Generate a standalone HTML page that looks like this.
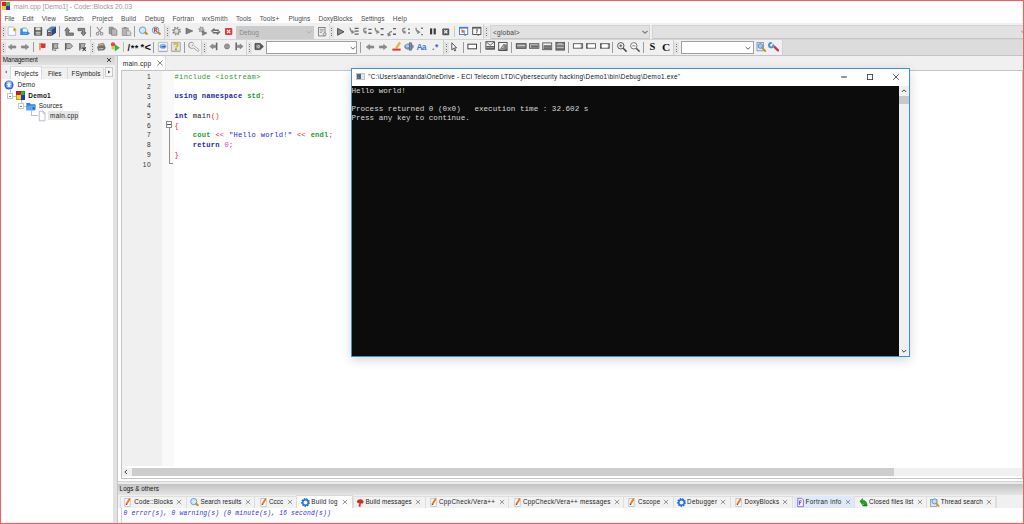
<!DOCTYPE html>
<html lang="en"><head><meta charset="utf-8"><title>main.cpp [Demo1] - Code::Blocks 20.03</title>
<style>
html,body{margin:0;padding:0;background:#fff;overflow:hidden;}
body{width:1024px;height:524px;position:relative;overflow:hidden;font-family:"Liberation Sans",sans-serif;}
div,span.t,svg.i{position:absolute;box-sizing:border-box;}
span.t{white-space:pre;display:block;}
svg.i{overflow:visible;}
</style></head>
<body>
<div style="left:0px;top:0px;width:1024px;height:24px;background:#fff;"></div>
<div style="left:0px;top:23.2px;width:1024px;height:32.8px;background:#f0f0f0;"></div>
<div style="left:0px;top:39px;width:1024px;height:1px;background:#d4d4d4;"></div>
<div style="left:0px;top:55px;width:1024px;height:1px;background:#c4c4c4;"></div>
<div style="left:0px;top:56px;width:1024px;height:468px;background:#f0f0f0;"></div>
<span id="t0" class="t" style="left:13.5px;top:1.40px;font-size:6.8px;line-height:12px;color:#9a9a9a;font-family:'Liberation Sans', sans-serif;letter-spacing:-0.047px;">main.cpp [Demo1] - Code::Blocks 20.03</span>
<div style="left:1.9px;top:2.2px;width:4.3px;height:4px;background:#d62222;"></div>
<div style="left:6.4px;top:2.4px;width:3.4px;height:3.8px;background:#4cb848;"></div>
<div style="left:1.9px;top:6.2px;width:4.3px;height:4.2px;background:#dcd838;"></div>
<div style="left:6.2px;top:6.2px;width:3.6px;height:4.2px;background:#4030c0;"></div>
<span id="t1" class="t" style="left:4.5px;top:13.00px;font-size:6.5px;line-height:12px;color:#4a4a4a;font-family:'Liberation Sans', sans-serif;letter-spacing:-0.146px;">File</span>
<span id="t2" class="t" style="left:22.5px;top:13.00px;font-size:6.5px;line-height:12px;color:#4a4a4a;font-family:'Liberation Sans', sans-serif;letter-spacing:-0.076px;">Edit</span>
<span id="t3" class="t" style="left:41.7px;top:13.00px;font-size:6.5px;line-height:12px;color:#4a4a4a;font-family:'Liberation Sans', sans-serif;letter-spacing:0.054px;">View</span>
<span id="t4" class="t" style="left:64px;top:13.00px;font-size:6.5px;line-height:12px;color:#4a4a4a;font-family:'Liberation Sans', sans-serif;letter-spacing:-0.202px;">Search</span>
<span id="t5" class="t" style="left:92px;top:13.00px;font-size:6.5px;line-height:12px;color:#4a4a4a;font-family:'Liberation Sans', sans-serif;letter-spacing:0.095px;">Project</span>
<span id="t6" class="t" style="left:121px;top:13.00px;font-size:6.5px;line-height:12px;color:#4a4a4a;font-family:'Liberation Sans', sans-serif;letter-spacing:0.186px;">Build</span>
<span id="t7" class="t" style="left:145px;top:13.00px;font-size:6.5px;line-height:12px;color:#4a4a4a;font-family:'Liberation Sans', sans-serif;letter-spacing:0.049px;">Debug</span>
<span id="t8" class="t" style="left:172.5px;top:13.00px;font-size:6.5px;line-height:12px;color:#4a4a4a;font-family:'Liberation Sans', sans-serif;letter-spacing:0.092px;">Fortran</span>
<span id="t9" class="t" style="left:202px;top:13.00px;font-size:6.5px;line-height:12px;color:#4a4a4a;font-family:'Liberation Sans', sans-serif;letter-spacing:0.191px;">wxSmith</span>
<span id="t10" class="t" style="left:236px;top:13.00px;font-size:6.5px;line-height:12px;color:#4a4a4a;font-family:'Liberation Sans', sans-serif;letter-spacing:0.043px;">Tools</span>
<span id="t11" class="t" style="left:259.7px;top:13.00px;font-size:6.5px;line-height:12px;color:#4a4a4a;font-family:'Liberation Sans', sans-serif;letter-spacing:0.119px;">Tools+</span>
<span id="t12" class="t" style="left:288.5px;top:13.00px;font-size:6.5px;line-height:12px;color:#4a4a4a;font-family:'Liberation Sans', sans-serif;letter-spacing:0.082px;">Plugins</span>
<span id="t13" class="t" style="left:318.5px;top:13.00px;font-size:6.5px;line-height:12px;color:#4a4a4a;font-family:'Liberation Sans', sans-serif;letter-spacing:-0.007px;">DoxyBlocks</span>
<span id="t14" class="t" style="left:361px;top:13.00px;font-size:6.5px;line-height:12px;color:#4a4a4a;font-family:'Liberation Sans', sans-serif;letter-spacing:-0.013px;">Settings</span>
<span id="t15" class="t" style="left:392.7px;top:13.00px;font-size:6.5px;line-height:12px;color:#4a4a4a;font-family:'Liberation Sans', sans-serif;letter-spacing:0.256px;">Help</span>
<div style="left:1.4px;top:25.5px;width:4.4px;height:12px;background:#e3e3e3;"></div>
<div style="left:2.6px;top:27.9px;width:1px;height:1px;background:#7c7c7c;"></div>
<div style="left:2.6px;top:30.299999999999997px;width:1px;height:1px;background:#7c7c7c;"></div>
<div style="left:2.6px;top:32.699999999999996px;width:1px;height:1px;background:#7c7c7c;"></div>
<div style="left:2.6px;top:35.099999999999994px;width:1px;height:1px;background:#7c7c7c;"></div>
<div style="left:1.4px;top:41.5px;width:4.4px;height:12px;background:#e3e3e3;"></div>
<div style="left:2.6px;top:43.9px;width:1px;height:1px;background:#7c7c7c;"></div>
<div style="left:2.6px;top:46.3px;width:1px;height:1px;background:#7c7c7c;"></div>
<div style="left:2.6px;top:48.699999999999996px;width:1px;height:1px;background:#7c7c7c;"></div>
<div style="left:2.6px;top:51.099999999999994px;width:1px;height:1px;background:#7c7c7c;"></div>
<div style="left:58.8px;top:26.1px;width:1px;height:11px;background:#9c9c9c;"></div>
<svg class="i" style="left:62.80px;top:25.60px" width="12" height="12" viewBox="0 0 12 12"><path d="M4.100 1.500L6.600 4.600H5.400V7h5v2.300H3V4.600H1.800z" fill="#8c8c8c" stroke="#555" stroke-width=".8" stroke-linejoin="round"/></svg>
<svg class="i" style="left:76.00px;top:25.60px" width="12" height="12" viewBox="0 0 12 12"><path d="M2 2.400h6.700v4.400H10L7.500 9.800 5 6.800h1.400V4.700H2z" fill="#8c8c8c" stroke="#555" stroke-width=".8" stroke-linejoin="round"/></svg>
<div style="left:89.5px;top:26.1px;width:1px;height:11px;background:#9c9c9c;"></div>
<div style="left:133.8px;top:26.1px;width:1px;height:11px;background:#9c9c9c;"></div>
<div style="left:164px;top:24px;width:1px;height:15px;background:#d0d0d0;"></div>
<div style="left:165.4px;top:25.5px;width:4.4px;height:12px;background:#e3e3e3;"></div>
<div style="left:166.6px;top:27.9px;width:1px;height:1px;background:#7c7c7c;"></div>
<div style="left:166.6px;top:30.299999999999997px;width:1px;height:1px;background:#7c7c7c;"></div>
<div style="left:166.6px;top:32.699999999999996px;width:1px;height:1px;background:#7c7c7c;"></div>
<div style="left:166.6px;top:35.099999999999994px;width:1px;height:1px;background:#7c7c7c;"></div>
<div style="left:236px;top:25.6px;width:77.6px;height:13.4px;background:#cccccc;"></div>
<span id="t16" class="t" style="left:239.2px;top:26.90px;font-size:6.6px;line-height:12px;color:#8a8a8a;font-family:'Liberation Sans', sans-serif;letter-spacing:0.092px;">Debug</span>
<svg class="i" style="left:302.60px;top:26.00px" width="12" height="12" viewBox="0 0 12 12"><path d="M3.600 5l2.400 2.200L8.400 5" stroke="#aaa" stroke-width=".9" fill="none"/></svg>
<svg class="i" style="left:315.50px;top:25.60px" width="12" height="12" viewBox="0 0 12 12"><rect x="2.600" y="1.500" width="6.400" height="8.400" fill="#f4f4f4" stroke="#777" stroke-width=".9"/><path d="M3.800 3.400h4M3.800 5h4M3.800 6.600h2.200" stroke="#888" stroke-width=".8"/><circle cx="8.600" cy="8.200" r="1.500" fill="#ddd" stroke="#777" stroke-width=".7"/></svg>
<div style="left:328.5px;top:24px;width:1px;height:15px;background:#d0d0d0;"></div>
<div style="left:329.4px;top:25.5px;width:4.4px;height:12px;background:#e3e3e3;"></div>
<div style="left:330.6px;top:27.9px;width:1px;height:1px;background:#7c7c7c;"></div>
<div style="left:330.6px;top:30.299999999999997px;width:1px;height:1px;background:#7c7c7c;"></div>
<div style="left:330.6px;top:32.699999999999996px;width:1px;height:1px;background:#7c7c7c;"></div>
<div style="left:330.6px;top:35.099999999999994px;width:1px;height:1px;background:#7c7c7c;"></div>
<svg class="i" style="left:334.50px;top:25.60px" width="12" height="12" viewBox="0 0 12 12"><path d="M2.600 2.400l6.400 3.400-6.400 3.400z" fill="#8c8c8c" stroke="#444" stroke-width=".9" stroke-linejoin="round"/></svg>
<svg class="i" style="left:347.60px;top:25.60px" width="12" height="12" viewBox="0 0 12 12"><path d="M2.200 1.800c0 3 .8 4 3 4.400M3.600 4.600l2 1.600-2.200 1.200" stroke="#888" stroke-width="1.400" fill="none"/><path d="M6.600 2.400h4M6.600 5.200h4M6.600 8.200h4" stroke="#606060" stroke-width="1.300"/></svg>
<svg class="i" style="left:360.60px;top:25.60px" width="12" height="12" viewBox="0 0 12 12"><path d="M5.400 2.200c-3.400 0-3.800 2.600-1.200 4.200M2.800 6.400l2.200.4-.4-2.200" stroke="#888" stroke-width="1.400" fill="none"/><path d="M7.400 3.400h3.200M7.400 7.200h3.200" stroke="#606060" stroke-width="1.400"/></svg>
<svg class="i" style="left:373.40px;top:25.60px" width="12" height="12" viewBox="0 0 12 12"><path d="M2.200 1.800c0 3 .8 4 3 4.400M3.600 4.600l2 1.600-2.200 1.200" stroke="#888" stroke-width="1.400" fill="none"/><path d="M7.600 2.800h3M7.600 8.600h3" stroke="#606060" stroke-width="1.400"/></svg>
<svg class="i" style="left:386.40px;top:25.60px" width="12" height="12" viewBox="0 0 12 12"><path d="M2.600 9.200c.2-2.200 1.400-3.400 3.400-3.800M1.800 7.200l.6 2.400 2.400-.8" stroke="#888" stroke-width="1.400" fill="none"/><path d="M7 2.600h3M7 8.200h3" stroke="#606060" stroke-width="1.400"/></svg>
<svg class="i" style="left:399.60px;top:25.60px" width="12" height="12" viewBox="0 0 12 12"><path d="M5.400 2.200c-3.400 0-3.800 2.600-1.200 4.200M2.800 6.400l2.200.4-.4-2.200" stroke="#888" stroke-width="1.400" fill="none"/><path d="M8.200 3.200h1.600M8.200 7h1.600" stroke="#606060" stroke-width="1.400"/></svg>
<svg class="i" style="left:413.00px;top:25.60px" width="12" height="12" viewBox="0 0 12 12"><path d="M3 1.800c0 3 .8 4 3 4.400M4.400 4.600l2 1.600-2.200 1.200" stroke="#888" stroke-width="1.400" fill="none"/><path d="M8.200 2.200h1.600M8.200 8.600h1.600" stroke="#606060" stroke-width="1.400"/></svg>
<svg class="i" style="left:426.70px;top:25.60px" width="12" height="12" viewBox="0 0 12 12"><rect x="3" y="2.400" width="2.200" height="6" fill="#3a3a3a"/><rect x="6.600" y="2.400" width="2.200" height="6" fill="#3a3a3a"/></svg>
<svg class="i" style="left:440.00px;top:25.60px" width="12" height="12" viewBox="0 0 12 12"><rect x="2.300" y="2.400" width="6.900" height="6.800" rx=".8" fill="#555"/><path d="M4.200 4.200l3.200 3.200M7.400 4.200L4.200 7.400" stroke="#f0f0f0" stroke-width="1.300"/></svg>
<div style="left:453.5px;top:26.1px;width:1px;height:11px;background:#cacaca;"></div>
<div style="left:483px;top:24px;width:1px;height:15px;background:#d0d0d0;"></div>
<div style="left:484.4px;top:25.5px;width:4.4px;height:12px;background:#e3e3e3;"></div>
<div style="left:485.6px;top:27.9px;width:1px;height:1px;background:#7c7c7c;"></div>
<div style="left:485.6px;top:30.299999999999997px;width:1px;height:1px;background:#7c7c7c;"></div>
<div style="left:485.6px;top:32.699999999999996px;width:1px;height:1px;background:#7c7c7c;"></div>
<div style="left:485.6px;top:35.099999999999994px;width:1px;height:1px;background:#7c7c7c;"></div>
<div style="left:490.2px;top:25.2px;width:159.8px;height:13.8px;background:#e1e1e1;border:1px solid #d2d2d2;border-bottom:1px solid #c6c6c6;"></div>
<span id="t17" class="t" style="left:493px;top:26.60px;font-size:6.6px;line-height:12px;color:#444;font-family:'Liberation Sans', sans-serif;letter-spacing:0.198px;">&lt;global&gt;</span>
<svg class="i" style="left:639.20px;top:26.20px" width="12" height="12" viewBox="0 0 12 12"><path d="M3.400 4.900l2.600 2.400L8.600 4.900" stroke="#7a7a7a" stroke-width="1.200" fill="none"/></svg>
<div style="left:652.2px;top:25.2px;width:371.8px;height:13.8px;background:#e1e1e1;border:1px solid #d2d2d2;border-bottom:1px solid #c6c6c6;"></div>
<svg class="i" style="left:1018.20px;top:26.20px" width="12" height="12" viewBox="0 0 12 12"><path d="M3.400 5l2.600 2.400L8.600 5" stroke="#8a8a8a" stroke-width="1" fill="none"/></svg>
<svg class="i" style="left:5.90px;top:40.90px" width="12" height="12" viewBox="0 0 12 12"><path d="M2.200 6l3.400-2.600v1.500h4.200v2.200H5.600v1.500z" fill="#8c8c8c" stroke="#747474" stroke-width=".5"/></svg>
<svg class="i" style="left:19.00px;top:40.90px" width="12" height="12" viewBox="0 0 12 12"><path d="M10 6L6.600 3.400v1.500H2.400v2.200h4.200v1.500z" fill="#8c8c8c" stroke="#747474" stroke-width=".5"/></svg>
<div style="left:33.0px;top:41.9px;width:1px;height:10px;background:#9c9c9c;"></div>
<svg class="i" style="left:37.00px;top:41.00px" width="12" height="12" viewBox="0 0 12 12"><path d="M2.900 2v7.200" stroke="#e0982c" stroke-width="1.500"/><path d="M3.700 2.400c1.400-.9 2.600.8 4.800-.1v4.300c-1 1-1.800-.2-2.600.8-.6-.9-1.400-.6-2.200-.2z" fill="#e0322c"/></svg>
<svg class="i" style="left:49.60px;top:41.00px" width="12" height="12" viewBox="0 0 12 12"><path d="M2.800 2v7.400" stroke="#666" stroke-width="1.300"/><path d="M3.600 2.600h4.600l-1 2.400 1 2.400H3.600z" fill="#b4b4b4" stroke="#666" stroke-width=".8"/><path d="M5.200 7.800v2M4.200 8.800l1 1.200 1-1.200" stroke="#777" stroke-width=".8" fill="none"/></svg>
<svg class="i" style="left:63.00px;top:41.00px" width="12" height="12" viewBox="0 0 12 12"><path d="M2.600 2v7.400" stroke="#666" stroke-width="1.300"/><path d="M3.400 2.600h3.800l2.400 2.500-2.400 2.500H3.400z" fill="#b4b4b4" stroke="#666" stroke-width=".8"/></svg>
<svg class="i" style="left:76.80px;top:41.00px" width="12" height="12" viewBox="0 0 12 12"><path d="M2.800 2v7.400" stroke="#666" stroke-width="1.300"/><path d="M3.600 2.600h4.600l-1 2.400 1 2.400H3.600z" fill="#b4b4b4" stroke="#666" stroke-width=".8"/><path d="M5.600 6.400l3.200 3.400M8.800 6.400L5.600 9.800" stroke="#444" stroke-width="1.100"/></svg>
<div style="left:89.5px;top:40px;width:1px;height:15px;background:#d0d0d0;"></div>
<div style="left:90.4px;top:41.5px;width:4.4px;height:12px;background:#e3e3e3;"></div>
<div style="left:91.6px;top:43.9px;width:1px;height:1px;background:#7c7c7c;"></div>
<div style="left:91.6px;top:46.3px;width:1px;height:1px;background:#7c7c7c;"></div>
<div style="left:91.6px;top:48.699999999999996px;width:1px;height:1px;background:#7c7c7c;"></div>
<div style="left:91.6px;top:51.099999999999994px;width:1px;height:1px;background:#7c7c7c;"></div>
<svg class="i" style="left:95.20px;top:41.40px" width="12" height="12" viewBox="0 0 12 12"><path d="M3.400 3.200l5.200-.9.700 1.900-5.500 1z" fill="#d0bc50" stroke="#666" stroke-width=".6"/><path d="M2 5.600l7.800-1.300.9 2.700-1.600 2.200-6 .6z" fill="#707070"/><path d="M3.800 8l4.400-.6" stroke="#ddd" stroke-width=".8"/></svg>
<svg class="i" style="left:108.60px;top:41.40px" width="12" height="12" viewBox="0 0 12 12"><circle cx="4" cy="3.400" r="2.200" fill="#e04a4a"/><rect x="2.600" y="5.400" width="3" height="3" fill="#d8c43a"/><path d="M5.800 3.200l5 3.600-5 3.600z" fill="#35b535"/></svg>
<div style="left:122.5px;top:42.0px;width:1px;height:10px;background:#bdbdbd;"></div>
<span id="t18" class="t" style="left:127.6px;top:41.80px;font-size:9.2px;line-height:12px;color:#111;font-family:'Liberation Sans', sans-serif;font-weight:bold;letter-spacing:0.494px;">/**</span>
<span id="t19" class="t" style="left:140.6px;top:41.00px;font-size:9.4px;line-height:12px;color:#111;font-family:'Liberation Sans', sans-serif;font-weight:bold;letter-spacing:0.344px;">*</span>
<span id="t20" class="t" style="left:144.4px;top:41.40px;font-size:11px;line-height:12px;color:#111;font-family:'Liberation Sans', sans-serif;font-weight:bold;letter-spacing:-0.237px;">&lt;</span>
<div style="left:152.7px;top:41.9px;width:1px;height:11px;background:#9c9c9c;"></div>
<svg class="i" style="left:157.20px;top:41.40px" width="12" height="12" viewBox="0 0 12 12"><rect x="1.400" y="1.400" width="9.200" height="8.800" rx=".6" fill="#f4f4f4" stroke="#b4b4b4" stroke-width=".8"/><path d="M1.400 10.600h9.200" stroke="#a8a8a8" stroke-width=".9"/><ellipse cx="6" cy="5.200" rx="3.300" ry="2.500" fill="#5aa4ec"/><ellipse cx="6" cy="4.500" rx="2.400" ry="1.200" fill="#a8d0f6"/><path d="M4.600 5.400h3M6.800 4.600l1 .8-1 .8" stroke="#1c4c9c" stroke-width=".8" fill="none"/></svg>
<svg class="i" style="left:170.40px;top:41.40px" width="12" height="12" viewBox="0 0 12 12"><rect x="1.400" y="1.400" width="9" height="8.800" rx=".5" fill="#e2e2e2" stroke="#9c9c9c" stroke-width=".8"/><path d="M1.400 10.600h9" stroke="#a8a8a8" stroke-width=".9"/><path d="M4.200 4c0-2 3.600-2 3.600 0 0 1.200-1.800 1.200-1.800 2.600" stroke="#d2bc1e" stroke-width="1.700" fill="none"/><rect x="5" y="7.400" width="1.900" height="1.900" fill="#b89c18"/></svg>
<div style="left:184.0px;top:41.9px;width:1px;height:11px;background:#9c9c9c;"></div>
<svg class="i" style="left:188.40px;top:41.40px" width="12" height="12" viewBox="0 0 12 12"><path d="M4.200 2.200a2.100 2.100 0 1 0 1.200 3.200L10 9.200" stroke="#9a9a9a" stroke-width="2.700" fill="none" stroke-linecap="round"/><path d="M4.300 2.400a1.900 1.900 0 1 0 1.100 2.900L10 9.200" stroke="#f8f8f8" stroke-width="1.300" fill="none" stroke-linecap="round"/><circle cx="3.200" cy="3" r="1.100" fill="#f0f0f0"/></svg>
<div style="left:201px;top:40px;width:1px;height:15px;background:#d0d0d0;"></div>
<div style="left:202.4px;top:41.5px;width:4.4px;height:12px;background:#e3e3e3;"></div>
<div style="left:203.6px;top:43.9px;width:1px;height:1px;background:#7c7c7c;"></div>
<div style="left:203.6px;top:46.3px;width:1px;height:1px;background:#7c7c7c;"></div>
<div style="left:203.6px;top:48.699999999999996px;width:1px;height:1px;background:#7c7c7c;"></div>
<div style="left:203.6px;top:51.099999999999994px;width:1px;height:1px;background:#7c7c7c;"></div>
<svg class="i" style="left:208.00px;top:41.40px" width="12" height="12" viewBox="0 0 12 12"><path d="M1.800 5.400l3.200-2.500v1.400h2.600v2.200H5v1.400z" fill="#8c8c8c" stroke="#777" stroke-width=".5"/><path d="M8.600 1.600v7.600" stroke="#6a6a6a" stroke-width="1.600"/></svg>
<svg class="i" style="left:220.90px;top:41.40px" width="12" height="12" viewBox="0 0 12 12"><circle cx="6" cy="5.400" r="2.500" fill="#9a9a9a" stroke="#777" stroke-width=".8"/></svg>
<svg class="i" style="left:233.40px;top:41.40px" width="12" height="12" viewBox="0 0 12 12"><path d="M10.200 5.400L7 2.900v1.400H4.400v2.200H7v1.400z" fill="#8c8c8c" stroke="#777" stroke-width=".5"/><path d="M3.200 1.600v7.600" stroke="#6a6a6a" stroke-width="1.600"/></svg>
<div style="left:246.4px;top:40px;width:1px;height:15px;background:#d0d0d0;"></div>
<div style="left:247.8px;top:41.5px;width:4.4px;height:12px;background:#e3e3e3;"></div>
<div style="left:249.0px;top:43.9px;width:1px;height:1px;background:#7c7c7c;"></div>
<div style="left:249.0px;top:46.3px;width:1px;height:1px;background:#7c7c7c;"></div>
<div style="left:249.0px;top:48.699999999999996px;width:1px;height:1px;background:#7c7c7c;"></div>
<div style="left:249.0px;top:51.099999999999994px;width:1px;height:1px;background:#7c7c7c;"></div>
<svg class="i" style="left:252.80px;top:41.40px" width="12" height="12" viewBox="0 0 12 12"><path d="M2 2.400h5.200L10.400 5.500 7.200 8.600H2z" fill="#5c5c5c" stroke="#4a4a4a" stroke-width=".8" stroke-linejoin="round"/><path d="M3.600 3.800h3.200v3.400H3.600z" fill="#d8d8d8"/><path d="M3.800 4l2.800 3M6.600 4L3.800 7" stroke="#777" stroke-width=".7"/></svg>
<div style="left:266.3px;top:41.4px;width:91.2px;height:12.6px;background:#fff;border:1px solid #a0a0a0;"></div>
<svg class="i" style="left:347.00px;top:41.60px" width="12" height="12" viewBox="0 0 12 12"><path d="M3.600 5l2.400 2.200L8.400 5" stroke="#555" stroke-width=".9" fill="none"/></svg>
<div style="left:360.0px;top:41.9px;width:1px;height:11px;background:#9c9c9c;"></div>
<svg class="i" style="left:363.80px;top:41.40px" width="12" height="12" viewBox="0 0 12 12"><path d="M2.200 6l3.400-2.600v1.500h4.200v2.200H5.600v1.500z" fill="#8c8c8c" stroke="#747474" stroke-width=".5"/></svg>
<svg class="i" style="left:377.20px;top:41.40px" width="12" height="12" viewBox="0 0 12 12"><path d="M10 6L6.600 3.400v1.500H2.400v2.200h4.200v1.500z" fill="#8c8c8c" stroke="#747474" stroke-width=".5"/></svg>
<svg class="i" style="left:390.60px;top:41.40px" width="12" height="12" viewBox="0 0 12 12"><rect x="1.400" y="7.600" width="8.200" height="2" fill="#e33030"/><path d="M4.400 7.200l1.600.4 3.600-5.400-1.600-1z" fill="#e3c02c" stroke="#c4a01a" stroke-width=".5"/></svg>
<svg class="i" style="left:403.40px;top:41.40px" width="12" height="12" viewBox="0 0 12 12"><ellipse cx="6" cy="5.600" rx="4.300" ry="2.700" fill="#6a9cd8" stroke="#4a78b0" stroke-width=".7"/><ellipse cx="4.400" cy="5" rx="1.800" ry="1.400" fill="#a8c8ec"/><rect x="6.400" y="1.800" width="2.200" height="7.400" fill="#8a8f98" stroke="#5a6068" stroke-width=".6"/></svg>
<span id="t21" class="t" style="left:416.4px;top:41.40px;font-size:8.4px;line-height:12px;color:#3a78c8;font-family:'Liberation Sans', sans-serif;font-weight:bold;letter-spacing:0.942px;letter-spacing:-.6px;">Aa</span>
<span id="t22" class="t" style="left:432px;top:41.00px;font-size:8.4px;line-height:12px;color:#3a68b8;font-family:'Liberation Sans', sans-serif;font-weight:bold;letter-spacing:0.653px;">.*</span>
<div style="left:443px;top:40px;width:1px;height:15px;background:#d0d0d0;"></div>
<div style="left:444.4px;top:41.5px;width:4.4px;height:12px;background:#e3e3e3;"></div>
<div style="left:445.6px;top:43.9px;width:1px;height:1px;background:#7c7c7c;"></div>
<div style="left:445.6px;top:46.3px;width:1px;height:1px;background:#7c7c7c;"></div>
<div style="left:445.6px;top:48.699999999999996px;width:1px;height:1px;background:#7c7c7c;"></div>
<div style="left:445.6px;top:51.099999999999994px;width:1px;height:1px;background:#7c7c7c;"></div>
<svg class="i" style="left:447.80px;top:41.40px" width="12" height="12" viewBox="0 0 12 12"><path d="M3.800 1.800v7l1.700-1.500 1.200 2.700 1-.5-1.200-2.600h2.100z" fill="#fff" stroke="#444" stroke-width=".9" stroke-linejoin="round"/></svg>
<div style="left:462.5px;top:41.9px;width:1px;height:11px;background:#9c9c9c;"></div>
<svg class="i" style="left:466.00px;top:41.40px" width="12" height="12" viewBox="0 0 12 12"><rect x="1.900" y="3.200" width="8.600" height="4.600" fill="#fff" stroke="#444" stroke-width="1"/></svg>
<div style="left:480.0px;top:41.9px;width:1px;height:11px;background:#9c9c9c;"></div>
<svg class="i" style="left:483.80px;top:41.40px" width="12" height="12" viewBox="0 0 12 12"><rect x="1.900" y=".7" width="8.600" height="7.500" fill="#f4f4f4" stroke="#444" stroke-width=".9"/><path d="M2.300 1.100L6.200 4.200l3.900-3.100" stroke="#555" stroke-width=".9" fill="none"/><rect x="2.300" y="5" width="7.800" height="2.900" fill="#5a5a5a"/><path d="M2.300 6.400h7.800" stroke="#ddd" stroke-width=".5"/></svg>
<svg class="i" style="left:497.40px;top:41.40px" width="12" height="12" viewBox="0 0 12 12"><rect x="1.700" y="1.400" width="8.400" height="8" fill="#f4f4f4" stroke="#444" stroke-width=".9"/><path d="M3.600 7.600l3.600-4.600v4.600z" fill="#bbb" stroke="#555" stroke-width=".7"/><path d="M7.400 3.400h2.400v5.400H7.400z" fill="#777"/><path d="M1.700 9h8.400" stroke="#444" stroke-width="1"/></svg>
<div style="left:511.0px;top:41.9px;width:1px;height:11px;background:#9c9c9c;"></div>
<svg class="i" style="left:514.80px;top:41.40px" width="12" height="12" viewBox="0 0 12 12"><rect x="1.300" y="2.700" width="9.800" height="4.600" fill="#8a8a8a" stroke="#444" stroke-width=".9"/><path d="M2.200 4.400h8" stroke="#e4e4e4" stroke-width=".8"/></svg>
<svg class="i" style="left:528.00px;top:41.40px" width="12" height="12" viewBox="0 0 12 12"><rect x="1.500" y="2.700" width="9.400" height="4.600" fill="#c0c0c0" stroke="#555" stroke-width=".9"/><rect x="3" y="4.400" width="7.200" height="2.200" fill="#6a6a6a"/></svg>
<svg class="i" style="left:541.20px;top:41.40px" width="12" height="12" viewBox="0 0 12 12"><rect x="1.700" y="1.900" width="9" height="6.800" fill="#f0f0f0" stroke="#555" stroke-width=".9"/><rect x="2.600" y="4.200" width="7.600" height="4" fill="#6a6a6a"/><path d="M2.600 6.200h7.600" stroke="#aaa" stroke-width=".5"/></svg>
<svg class="i" style="left:554.20px;top:41.40px" width="12" height="12" viewBox="0 0 12 12"><rect x="1.900" y="1.400" width="8.600" height="7.700" fill="#7a7a7a" stroke="#555" stroke-width=".9"/><path d="M2.600 3.600h7.200M2.600 6.400h7.200" stroke="#ddd" stroke-width=".7"/><rect x="4" y="1.800" width="4.200" height="1.300" fill="#aaa"/></svg>
<div style="left:567.9px;top:41.9px;width:1px;height:11px;background:#9c9c9c;"></div>
<svg class="i" style="left:572.00px;top:41.40px" width="12" height="12" viewBox="0 0 12 12"><rect x="1.400" y="2.700" width="9.200" height="4.500" fill="#fff" stroke="#555" stroke-width=".9"/><path d="M9.400 2.700v4.500" stroke="#555" stroke-width="1.300" stroke-dasharray="1 .8"/></svg>
<svg class="i" style="left:585.40px;top:41.40px" width="12" height="12" viewBox="0 0 12 12"><rect x="1.500" y="2.700" width="9" height="4.500" fill="#fff" stroke="#555" stroke-width=".9"/><path d="M2.300 2.700v4.500" stroke="#555" stroke-width="1.400" stroke-dasharray="1 .8"/></svg>
<svg class="i" style="left:598.60px;top:41.40px" width="12" height="12" viewBox="0 0 12 12"><rect x="1.500" y="2.700" width="8.800" height="4.500" fill="#fff" stroke="#555" stroke-width=".9"/><path d="M2.300 2.700v4.500M9.500 2.700v4.500" stroke="#555" stroke-width="1.400" stroke-dasharray="1 .8"/></svg>
<div style="left:612.3px;top:41.9px;width:1px;height:11px;background:#9c9c9c;"></div>
<svg class="i" style="left:616.00px;top:41.40px" width="12" height="12" viewBox="0 0 12 12"><circle cx="4.800" cy="4.800" r="3.200" fill="#fafafa" stroke="#555" stroke-width="1"/><path d="M7.200 7.200l3.400 3.400" stroke="#444" stroke-width="1.500"/><path d="M3.200 4.800h3.200M4.800 3.200v3.200" stroke="#555" stroke-width=".9"/></svg>
<svg class="i" style="left:629.40px;top:41.40px" width="12" height="12" viewBox="0 0 12 12"><circle cx="4.800" cy="4.800" r="3.200" fill="#fafafa" stroke="#777" stroke-width="1"/><path d="M7.200 7.200l3.400 3.400" stroke="#555" stroke-width="1.500"/><path d="M3.200 4.800h3.200" stroke="#777" stroke-width=".9"/></svg>
<div style="left:643.3px;top:41.9px;width:1px;height:11px;background:#9c9c9c;"></div>
<span id="t23" class="t" style="left:649.6px;top:40.80px;font-size:10.4px;line-height:12px;color:#111;font-family:'Liberation Serif', serif;font-weight:bold;letter-spacing:1.619px;">S</span>
<span id="t24" class="t" style="left:662px;top:40.80px;font-size:11.4px;line-height:12px;color:#111;font-family:'Liberation Serif', serif;font-weight:bold;letter-spacing:1.166px;">C</span>
<div style="left:673px;top:40px;width:1px;height:15px;background:#d0d0d0;"></div>
<div style="left:674.4px;top:41.5px;width:4.4px;height:12px;background:#e3e3e3;"></div>
<div style="left:675.6px;top:43.9px;width:1px;height:1px;background:#7c7c7c;"></div>
<div style="left:675.6px;top:46.3px;width:1px;height:1px;background:#7c7c7c;"></div>
<div style="left:675.6px;top:48.699999999999996px;width:1px;height:1px;background:#7c7c7c;"></div>
<div style="left:675.6px;top:51.099999999999994px;width:1px;height:1px;background:#7c7c7c;"></div>
<div style="left:680.7px;top:41.4px;width:73.4px;height:12.6px;background:#fff;border:1px solid #a0a0a0;"></div>
<svg class="i" style="left:742.20px;top:41.60px" width="12" height="12" viewBox="0 0 12 12"><path d="M3.600 5l2.400 2.200L8.400 5" stroke="#555" stroke-width=".9" fill="none"/></svg>
<svg class="i" style="left:755.40px;top:41.40px" width="12" height="12" viewBox="0 0 12 12"><rect x="2" y="1.400" width="6.400" height="8.400" fill="#e4ecf6" stroke="#7a8aa0" stroke-width=".8"/><circle cx="5.400" cy="5" r="2.400" fill="#9cc8f0" stroke="#4a86c8" stroke-width=".8"/><path d="M7.200 7l3 3" stroke="#b8962a" stroke-width="1.800" stroke-linecap="round"/></svg>
<svg class="i" style="left:768.40px;top:41.40px" width="12" height="12" viewBox="0 0 12 12"><path d="M3 2a2.200 2.200 0 1 0 2.400 2.600L7 6.400" stroke="#4f8fd0" stroke-width="2" fill="none" stroke-linecap="round"/><path d="M7 6.400l3 3" stroke="#e03030" stroke-width="2.200" stroke-linecap="round"/></svg>
<div style="left:781.5px;top:40px;width:1px;height:15px;background:#d0d0d0;"></div>
<div style="left:782.5px;top:40px;width:241.5px;height:15px;background:#dcdcdc;"></div>
<svg class="i" style="left:0;top:0" width="1024" height="524" viewBox="0 0 1024 524"><path d="M8.100 27h5.300l2.200 2.200v6.200H8.100z" fill="#fbfbff" stroke="#a0a8d0" stroke-width=".7"/><circle cx="14.600" cy="29.700" r="1.700" fill="#d8c02c"/><circle cx="14.600" cy="29.700" r=".6" fill="#a08818"/><path d="M20.300 28.600h2.200v6h-2.200z" fill="#2f86dd"/><path d="M22.300 28.200h3.500l1.900 1.700v2.600h-5.400z" fill="#fff" stroke="#2f86dd" stroke-width=".7"/><path d="M20.100 34.900l1.700-3.100H28l2 1.500-2.300 1.600z" fill="#2f86dd"/><path d="M22.600 33.300h4.600" stroke="#8cc0f4" stroke-width=".7"/><rect x="34" y="27" width="8.200" height="8.800" rx="1" fill="#5e5e5e"/><rect x="35.600" y="27.400" width="5" height="2.800" fill="#e0e0e0"/><rect x="35.800" y="31.800" width="4.600" height="3.600" fill="#a4a4a4"/><rect x="35.800" y="31.800" width="4.600" height="1" fill="#c8c8c8"/><path d="M46.900 29.600L51.200 26.500h4.800L51.700 29.600z" fill="#5f7fae"/><path d="M51.700 29.600L56 26.500v6.300L51.700 36z" fill="#2e4a78"/><path d="M46.900 29.600h4.800V36h-4.800z" fill="#3d5c8c"/><rect x="48" y="33.300" width="2.700" height="2" fill="#e06838"/><rect x="48" y="30.700" width="2.700" height="1.300" fill="#cfd8e8"/><path d="M96.800 27l4.300 5.600M102.400 27l-4.300 5.600" stroke="#9a9a9a" stroke-width="1.200" fill="none"/><circle cx="97.600" cy="33.700" r="1.300" fill="none" stroke="#9a9a9a" stroke-width="1.100"/><circle cx="101.600" cy="33.700" r="1.300" fill="none" stroke="#9a9a9a" stroke-width="1.100"/><path d="M109.200 27.200h3.600l1.400 1.300v5.300h-5z" fill="#9c9c9c" stroke="#777" stroke-width=".7"/><path d="M111.600 28.800h3.800l1.500 1.400v5.100h-5.300z" fill="#b8b8b8" stroke="#777" stroke-width=".7"/><rect x="122.200" y="28" width="6" height="7.400" fill="#b4b4b4" stroke="#8a8a8a" stroke-width=".7"/><rect x="123.800" y="26.900" width="2.800" height="1.800" rx=".6" fill="#8c8c8c"/><path d="M126.400 30.800h3l1.400 1.300v3.300h-4.400z" fill="#d4d4d4" stroke="#8a8a8a" stroke-width=".7"/><circle cx="142.600" cy="30.200" r="3.300" fill="#d2e6f4" stroke="#5b9ad0" stroke-width=".9"/><path d="M145.400 32.600l1.400 1.200" stroke="#b8981c" stroke-width="2.300" stroke-linecap="round"/><circle cx="155.600" cy="30.200" r="3.300" fill="#d2e6f4" stroke="#5b9ad0" stroke-width=".9"/><path d="M158.400 32.600l1.400 1.200" stroke="#b8981c" stroke-width="2.300" stroke-linecap="round"/><path d="M154.600 32.400v-4.200h1.400c1.400 0 1.400 2 0 2h-1.400M156 30.200l1.200 2.200" stroke="#d8302a" stroke-width="1" fill="none"/><circle cx="176.500" cy="31.100" r="3.500" fill="none" stroke="#8a8a8a" stroke-width="1.700" stroke-dasharray="1.500 1.250"/><circle cx="176.500" cy="31.100" r="2.500" fill="#e0e0e0" stroke="#8a8a8a" stroke-width="1"/><path d="M186 28l6.800 3-6.800 3z" fill="#808080" stroke="#5e5e5e" stroke-width=".6" stroke-linejoin="round"/><circle cx="201.400" cy="29.500" r="2.300" fill="#b4b4b4" stroke="#8a8a8a" stroke-width="1.400" stroke-dasharray="1.200 .9"/><path d="M202.400 30.800l4.600 2.300-4.600 2.300z" fill="#7c7c7c" stroke="#666" stroke-width=".5"/><path d="M211.400 31.600l2.600-2.600v1.300h4.200v1.300M220 31.400l-2.600 2.600v-1.300h-4.200v-1.300" fill="none" stroke="#6a6a6a" stroke-width="1.400" stroke-linejoin="round"/><rect x="225" y="27.900" width="7.300" height="7.200" rx="1.100" fill="#e03c3c"/><path d="M227 29.900l3.200 3.200M230.200 29.900l-3.200 3.200" stroke="#fff" stroke-width="1.300"/><rect x="459.500" y="27.300" width="8.200" height="7.200" fill="#fff" stroke="#3a78e0" stroke-width=".9"/><rect x="459.500" y="27.300" width="8.200" height="1.300" fill="#3a78e0"/><path d="M461.600 29.400l3.800 1.700-1.400.6 1.100 1.600-.9.500-1.100-1.700-1.200 1z" fill="#e07a20" stroke="#b85a10" stroke-width=".3"/><path d="M464.200 35h2l-1 1.100z" fill="#555"/><rect x="472.700" y="27.300" width="8.200" height="7.200" fill="#f8f8f8" stroke="#4a4a4a" stroke-width=".9"/><rect x="472.700" y="27.300" width="8.200" height="1.300" fill="#555"/><path d="M477.400 29.600l-.9 3.800M476 29.800h1.600" stroke="#555" stroke-width=".9" fill="none"/><path d="M477.200 35h2l-1 1.100z" fill="#555"/></svg>
<div style="left:113px;top:56px;width:4px;height:468px;background:#e2e2e2;"></div>
<div style="left:117px;top:56px;width:1.4px;height:468px;background:#c6c6c6;"></div>
<div style="left:1px;top:55.4px;width:113.6px;height:9.6px;background:linear-gradient(#cdcdcd,#e2e2e2);"></div>
<span id="t25" class="t" style="left:2.8px;top:54.00px;font-size:6.3px;line-height:12px;color:#1a1a1a;font-family:'Liberation Sans', sans-serif;letter-spacing:-0.197px;">Management</span>
<svg class="i" style="left:103.40px;top:54.00px" width="12" height="12" viewBox="0 0 12 12"><path d="M4 4l4 4M8 4l-4 4" stroke="#222" stroke-width=".85" fill="none"/></svg>
<div style="left:1px;top:65px;width:113.6px;height:14.4px;background:#f0f0f0;"></div>
<div style="left:10.4px;top:66px;width:31.8px;height:13.6px;background:#fff;border:1px solid #dadada;border-bottom:none;"></div>
<div style="left:42.6px;top:67px;width:25px;height:12px;background:#f0f0f0;border-right:1px solid #dadada;border-top:1px solid #e0e0e0;"></div>
<div style="left:67.6px;top:67px;width:36px;height:12px;background:#f0f0f0;border-right:1px solid #dadada;border-top:1px solid #e0e0e0;"></div>
<span id="t26" class="t" style="left:14.4px;top:67.60px;font-size:6.4px;line-height:12px;color:#222;font-family:'Liberation Sans', sans-serif;letter-spacing:0.088px;">Projects</span>
<span id="t27" class="t" style="left:47.9px;top:67.60px;font-size:6.4px;line-height:12px;color:#222;font-family:'Liberation Sans', sans-serif;letter-spacing:0.020px;">Files</span>
<span id="t28" class="t" style="left:71.5px;top:67.60px;font-size:6.4px;line-height:12px;color:#222;font-family:'Liberation Sans', sans-serif;letter-spacing:0.072px;">FSymbols</span>
<svg class="i" style="left:-0.20px;top:65.60px" width="12" height="12" viewBox="0 0 12 12"><path d="M7 4.400L5 6l2 1.600z" fill="#777"/></svg>
<div style="left:104.8px;top:67px;width:8px;height:9.6px;background:#f6f6f6;border:1px solid #c8c8c8;"></div>
<svg class="i" style="left:102.60px;top:65.60px" width="12" height="12" viewBox="0 0 12 12"><path d="M5.200 4.400L7.200 6l-2 1.600z" fill="#111"/></svg>
<div style="left:1px;top:79.4px;width:112px;height:444px;background:#fff;"></div>
<svg class="i" style="left:3.40px;top:79.00px" width="12" height="12" viewBox="0 0 12 12"><circle cx="6" cy="6" r="4.600" fill="#2b62e0"/><circle cx="6" cy="6" r="3.200" fill="#6aa0f4"/><path d="M6 3.600L3.600 6h1.200v2h2.400V6h1.200z" fill="#fff"/><ellipse cx="6" cy="3.400" rx="2.600" ry="1.300" fill="#cfe0ff" opacity=".55"/></svg>
<span id="t29" class="t" style="left:17.4px;top:79.40px;font-size:6.4px;line-height:12px;color:#222;font-family:'Liberation Sans', sans-serif;letter-spacing:0.234px;">Demo</span>
<div style="left:9.6px;top:89.6px;width:1px;height:4px;background:#bbb;"></div>
<div style="left:7.2px;top:93.4px;width:5.6px;height:5.6px;background:#fff;border:1px solid #c6c6c6;"></div>
<div style="left:8.7px;top:95.8px;width:2.6px;height:1px;background:#808080;"></div>
<div style="left:12.8px;top:95.8px;width:3px;height:1px;background:#c4c4c4;"></div>
<div style="left:16px;top:90.8px;width:4.6px;height:4.6px;background:#e01818;"></div>
<div style="left:20.6px;top:90.8px;width:4.4px;height:4.6px;background:#20c020;"></div>
<div style="left:16px;top:95.4px;width:4.6px;height:4.5px;background:#e8e020;"></div>
<div style="left:20.6px;top:95.4px;width:4.4px;height:4.5px;background:#1838e0;"></div>
<div style="left:15.8px;top:90.6px;width:9.4px;height:9.5px;border:1px solid rgba(60,60,60,.35);"></div>
<span id="t30" class="t" style="left:28.3px;top:89.70px;font-size:6.5px;line-height:12px;color:#111;font-family:'Liberation Sans', sans-serif;font-weight:bold;letter-spacing:0.182px;">Demo1</span>
<div style="left:20.6px;top:100px;width:1px;height:3.4px;background:#c4c4c4;"></div>
<div style="left:18px;top:103.4px;width:5.6px;height:5.6px;background:#fff;border:1px solid #c6c6c6;"></div>
<div style="left:19.5px;top:105.8px;width:2.6px;height:1px;background:#808080;"></div>
<div style="left:23.6px;top:105.8px;width:3px;height:1px;background:#c4c4c4;"></div>
<svg class="i" style="left:25.40px;top:99.60px" width="12" height="12" viewBox="0 0 12 12"><path d="M1.400 3h3.400l1 1.200h4.600v6H1.400z" fill="#2d7fd8"/><path d="M2.600 5.400h8.600l-1.400 4.800H1.400z" fill="#58a6f0"/><path d="M7.600 7.200h2.200v2.200H7.600z" fill="#1d5fb0"/></svg>
<span id="t31" class="t" style="left:38.8px;top:99.90px;font-size:6.4px;line-height:12px;color:#222;font-family:'Liberation Sans', sans-serif;letter-spacing:0.021px;">Sources</span>
<div style="left:31.2px;top:110px;width:1px;height:6px;background:#c0c0c0;"></div>
<div style="left:31.2px;top:115.4px;width:7px;height:1px;background:#c0c0c0;"></div>
<svg class="i" style="left:35.80px;top:109.60px" width="12" height="12" viewBox="0 0 12 12"><path d="M3.200 1.200h3.800l2 2v7.600H3.200z" fill="#fdfdfd" stroke="#a8b0c0" stroke-width=".8"/><path d="M7 1.200v2h2" fill="none" stroke="#a8b0c0" stroke-width=".7"/></svg>
<div style="left:48.4px;top:110.8px;width:31px;height:9.6px;background:#e6e6e6;"></div>
<span id="t32" class="t" style="left:50px;top:110.00px;font-size:6.4px;line-height:12px;color:#222;font-family:'Liberation Sans', sans-serif;letter-spacing:0.308px;">main.cpp</span>
<div style="left:118.4px;top:56px;width:905.6px;height:14px;background:#f0f0f0;"></div>
<div style="left:118.4px;top:70px;width:905.6px;height:411px;background:#fff;"></div>
<div style="left:118.4px;top:56px;width:47.8px;height:14.2px;background:#fff;border-right:1px solid #e2e2e2;"></div>
<span id="t33" class="t" style="left:122.7px;top:58.00px;font-size:6.6px;line-height:12px;color:#222;font-family:'Liberation Sans', sans-serif;letter-spacing:0.242px;">main.cpp</span>
<svg class="i" style="left:153.70px;top:57.30px" width="12" height="12" viewBox="0 0 12 12"><path d="M3.400 3.600l5.200 4.800M8.600 3.600L3.400 8.400" stroke="#777" stroke-width=".9" fill="none"/></svg>
<div style="left:120.8px;top:69.8px;width:902px;height:409px;background:#fff;border:1px solid #c4c4c4;"></div>
<div style="left:121.8px;top:70.8px;width:40.2px;height:395.6px;background:#f0f0f0;"></div>
<div style="left:162px;top:70.8px;width:11.8px;height:395.6px;background:#f9f9f9;"></div>
<span id="t34" class="t" style="left:147.0px;top:71.10px;font-size:6.6px;line-height:12px;color:#333;font-family:'Liberation Sans', sans-serif;letter-spacing:0.328px;">1</span>
<span id="t35" class="t" style="left:147.0px;top:80.82px;font-size:6.6px;line-height:12px;color:#333;font-family:'Liberation Sans', sans-serif;letter-spacing:0.328px;">2</span>
<span id="t36" class="t" style="left:147.0px;top:90.54px;font-size:6.6px;line-height:12px;color:#333;font-family:'Liberation Sans', sans-serif;letter-spacing:0.328px;">3</span>
<span id="t37" class="t" style="left:147.0px;top:100.26px;font-size:6.6px;line-height:12px;color:#333;font-family:'Liberation Sans', sans-serif;letter-spacing:0.328px;">4</span>
<span id="t38" class="t" style="left:147.0px;top:109.98px;font-size:6.6px;line-height:12px;color:#333;font-family:'Liberation Sans', sans-serif;letter-spacing:0.328px;">5</span>
<span id="t39" class="t" style="left:147.0px;top:119.70px;font-size:6.6px;line-height:12px;color:#333;font-family:'Liberation Sans', sans-serif;letter-spacing:0.328px;">6</span>
<span id="t40" class="t" style="left:147.0px;top:129.42px;font-size:6.6px;line-height:12px;color:#333;font-family:'Liberation Sans', sans-serif;letter-spacing:0.328px;">7</span>
<span id="t41" class="t" style="left:147.0px;top:139.14px;font-size:6.6px;line-height:12px;color:#333;font-family:'Liberation Sans', sans-serif;letter-spacing:0.328px;">8</span>
<span id="t42" class="t" style="left:147.0px;top:148.86px;font-size:6.6px;line-height:12px;color:#333;font-family:'Liberation Sans', sans-serif;letter-spacing:0.328px;">9</span>
<span id="t43" class="t" style="left:142.8px;top:158.58px;font-size:6.6px;line-height:12px;color:#333;font-family:'Liberation Sans', sans-serif;letter-spacing:0.428px;">10</span>
<div style="left:165.6px;top:121.4px;width:6.8px;height:6.8px;background:#fff;border:1px solid #8c8c8c;"></div>
<div style="left:167.3px;top:124.3px;width:3.4px;height:1px;background:#555;"></div>
<div style="left:168.5px;top:128.2px;width:1px;height:35.4px;background:#909090;"></div>
<div style="left:168.5px;top:163px;width:4.8px;height:1px;background:#909090;"></div>
<span id="t44" class="t" style="left:174.6px;top:70.90px;font-size:7.1px;line-height:12px;color:#2ca02c;font-family:'Liberation Mono', monospace;letter-spacing:0.267px;">#include &lt;iostream&gt;</span>
<span id="t45" class="t" style="left:174.6px;top:90.34px;font-size:7.1px;line-height:12px;color:#1f1fa8;font-family:'Liberation Mono', monospace;font-weight:bold;letter-spacing:0.264px;">using namespace</span>
<span id="t46" class="t" style="left:247.16px;top:90.34px;font-size:7.1px;line-height:12px;color:#1f9a3a;font-family:'Liberation Mono', monospace;font-weight:bold;letter-spacing:0.208px;">std</span>
<span id="t47" class="t" style="left:260.765px;top:90.34px;font-size:7.1px;line-height:12px;color:#e62a2a;font-family:'Liberation Mono', monospace;letter-spacing:0.069px;">;</span>
<span id="t48" class="t" style="left:174.6px;top:109.78px;font-size:7.1px;line-height:12px;color:#1f1fa8;font-family:'Liberation Mono', monospace;font-weight:bold;letter-spacing:0.208px;">int</span>
<span id="t49" class="t" style="left:192.74px;top:109.78px;font-size:7.1px;line-height:12px;color:#222;font-family:'Liberation Mono', monospace;letter-spacing:0.227px;">main</span>
<span id="t50" class="t" style="left:210.88px;top:109.78px;font-size:7.1px;line-height:12px;color:#e62a2a;font-family:'Liberation Mono', monospace;letter-spacing:0.177px;">()</span>
<span id="t51" class="t" style="left:174.6px;top:119.50px;font-size:7.1px;line-height:12px;color:#e62a2a;font-family:'Liberation Mono', monospace;letter-spacing:0.069px;">{</span>
<span id="t52" class="t" style="left:192.74px;top:129.22px;font-size:7.1px;line-height:12px;color:#1f9a3a;font-family:'Liberation Mono', monospace;font-weight:bold;letter-spacing:0.227px;">cout</span>
<span id="t53" class="t" style="left:215.415px;top:129.22px;font-size:7.1px;line-height:12px;color:#e62a2a;font-family:'Liberation Mono', monospace;letter-spacing:0.177px;">&lt;&lt;</span>
<span id="t54" class="t" style="left:229.01999999999998px;top:129.22px;font-size:7.1px;line-height:12px;color:#2222e0;font-family:'Liberation Mono', monospace;letter-spacing:0.263px;">&quot;Hello world!&quot;</span>
<span id="t55" class="t" style="left:297.045px;top:129.22px;font-size:7.1px;line-height:12px;color:#e62a2a;font-family:'Liberation Mono', monospace;letter-spacing:0.177px;">&lt;&lt;</span>
<span id="t56" class="t" style="left:310.65px;top:129.22px;font-size:7.1px;line-height:12px;color:#1f9a3a;font-family:'Liberation Mono', monospace;font-weight:bold;letter-spacing:0.227px;">endl</span>
<span id="t57" class="t" style="left:328.78999999999996px;top:129.22px;font-size:7.1px;line-height:12px;color:#e62a2a;font-family:'Liberation Mono', monospace;letter-spacing:0.069px;">;</span>
<span id="t58" class="t" style="left:192.74px;top:138.94px;font-size:7.1px;line-height:12px;color:#1f1fa8;font-family:'Liberation Mono', monospace;font-weight:bold;letter-spacing:0.244px;">return</span>
<span id="t59" class="t" style="left:224.485px;top:138.94px;font-size:7.1px;line-height:12px;color:#e030e0;font-family:'Liberation Mono', monospace;letter-spacing:0.069px;">0</span>
<span id="t60" class="t" style="left:229.01999999999998px;top:138.94px;font-size:7.1px;line-height:12px;color:#e62a2a;font-family:'Liberation Mono', monospace;letter-spacing:0.069px;">;</span>
<span id="t61" class="t" style="left:174.6px;top:148.66px;font-size:7.1px;line-height:12px;color:#e62a2a;font-family:'Liberation Mono', monospace;letter-spacing:0.069px;">}</span>
<div style="left:121.8px;top:466.6px;width:900px;height:11.2px;background:#fff;"></div>
<div style="left:121.8px;top:468px;width:900px;height:8.4px;background:#f0f0f0;"></div>
<div style="left:131.8px;top:468px;width:762.4px;height:8.4px;background:#cdcdcd;"></div>
<svg class="i" style="left:120.40px;top:466.20px" width="12" height="12" viewBox="0 0 12 12"><path d="M7 4L4.800 6 7 8" stroke="#444" stroke-width="1" fill="none"/></svg>
<div style="left:118.4px;top:481px;width:905.6px;height:1px;background:#d4d4d4;"></div>
<div style="left:118.4px;top:482px;width:905.6px;height:2.2px;background:#ececec;"></div>
<div style="left:118.4px;top:484.2px;width:905.6px;height:10.4px;background:linear-gradient(#c2c2c2,#e4e4e4);"></div>
<span id="t62" class="t" style="left:119.6px;top:483.20px;font-size:6.3px;line-height:12px;color:#111;font-family:'Liberation Sans', sans-serif;letter-spacing:0.042px;">Logs &amp; others</span>
<div style="left:118.4px;top:494.6px;width:905.6px;height:13.6px;background:#f0f0f0;"></div>
<div style="left:118.4px;top:508.3px;width:905.6px;height:15.7px;background:#fff;"></div>
<div style="left:120.8px;top:508px;width:1px;height:16px;background:#d4d4d4;"></div>
<div style="left:120px;top:495.6px;width:876px;height:12.4px;background:#f2f2f2;border:1px solid #dedede;border-bottom:none;"></div>
<div style="left:296.4px;top:494.6px;width:56.4px;height:13.6px;background:#fff;border:1px solid #d8d8d8;border-bottom:none;"></div>
<div style="left:794px;top:496.4px;width:60px;height:11.6px;background:#dfe9f8;"></div>
<div style="left:185.6px;top:496.4px;width:1px;height:11.6px;background:#dedede;"></div>
<div style="left:254.4px;top:496.4px;width:1px;height:11.6px;background:#dedede;"></div>
<div style="left:296.4px;top:496.4px;width:1px;height:11.6px;background:#dedede;"></div>
<div style="left:352.8px;top:496.4px;width:1px;height:11.6px;background:#dedede;"></div>
<div style="left:424.6px;top:496.4px;width:1px;height:11.6px;background:#dedede;"></div>
<div style="left:508.4px;top:496.4px;width:1px;height:11.6px;background:#dedede;"></div>
<div style="left:623px;top:496.4px;width:1px;height:11.6px;background:#dedede;"></div>
<div style="left:672.6px;top:496.4px;width:1px;height:11.6px;background:#dedede;"></div>
<div style="left:729.6px;top:496.4px;width:1px;height:11.6px;background:#dedede;"></div>
<div style="left:791.6px;top:496.4px;width:1px;height:11.6px;background:#dedede;"></div>
<div style="left:854.4px;top:496.4px;width:1px;height:11.6px;background:#dedede;"></div>
<div style="left:926px;top:496.4px;width:1px;height:11.6px;background:#dedede;"></div>
<div style="left:996px;top:496.4px;width:1px;height:11.6px;background:#dedede;"></div>
<svg class="i" style="left:122.10px;top:496.50px" width="11" height="11" viewBox="0 0 12 12"><path d="M3 1.600h4.200l1.800 1.800v7H3z" fill="#fdfdfd" stroke="#a8b0c8" stroke-width=".7"/><path d="M8.300 2.200L4.900 7.600" stroke="#f07a22" stroke-width="2.100" stroke-linecap="round"/><path d="M4.100 9l.3-1.700 1.300.9z" fill="#444"/></svg>
<span id="t63" class="t" style="left:134.3px;top:496.40px;font-size:6.3px;line-height:12px;color:#222;font-family:'Liberation Sans', sans-serif;letter-spacing:0.141px;">Code::Blocks</span>
<svg class="i" style="left:173.40px;top:495.80px" width="12" height="12" viewBox="0 0 12 12"><path d="M3.800 3.900l4.400 4.200M8.200 3.900L3.800 8.100" stroke="#8a8a8a" stroke-width=".9" fill="none"/></svg>
<svg class="i" style="left:188.80px;top:496.50px" width="11" height="11" viewBox="0 0 12 12"><circle cx="5.200" cy="5" r="3.400" fill="#d4e8f8" stroke="#5a96cc" stroke-width="1"/><path d="M8 7.600l1.500 1.300" stroke="#b8981c" stroke-width="2.300" stroke-linecap="round"/></svg>
<span id="t64" class="t" style="left:200.4px;top:496.40px;font-size:6.3px;line-height:12px;color:#222;font-family:'Liberation Sans', sans-serif;letter-spacing:0.054px;">Search results</span>
<svg class="i" style="left:241.80px;top:495.80px" width="12" height="12" viewBox="0 0 12 12"><path d="M3.800 3.900l4.400 4.200M8.200 3.900L3.800 8.100" stroke="#8a8a8a" stroke-width=".9" fill="none"/></svg>
<svg class="i" style="left:258.10px;top:496.50px" width="11" height="11" viewBox="0 0 12 12"><path d="M3 1.600h4.200l1.800 1.800v7H3z" fill="#fdfdfd" stroke="#a8b0c8" stroke-width=".7"/><path d="M8.300 2.200L4.900 7.600" stroke="#f07a22" stroke-width="2.100" stroke-linecap="round"/><path d="M4.100 9l.3-1.700 1.300.9z" fill="#444"/></svg>
<span id="t65" class="t" style="left:268.9px;top:496.40px;font-size:6.3px;line-height:12px;color:#222;font-family:'Liberation Sans', sans-serif;letter-spacing:0.125px;">Cccc</span>
<svg class="i" style="left:284.00px;top:495.80px" width="12" height="12" viewBox="0 0 12 12"><path d="M3.800 3.900l4.400 4.200M8.200 3.900L3.800 8.100" stroke="#8a8a8a" stroke-width=".9" fill="none"/></svg>
<svg class="i" style="left:300.00px;top:496.50px" width="11" height="11" viewBox="0 0 12 12"><circle cx="6" cy="6" r="3.800" fill="none" stroke="#2070e0" stroke-width="2" stroke-dasharray="1.600 1.000"/><circle cx="6" cy="6" r="3" fill="none" stroke="#2070e0" stroke-width="1.600"/></svg>
<span id="t66" class="t" style="left:311.3px;top:496.40px;font-size:6.3px;line-height:12px;color:#222;font-family:'Liberation Sans', sans-serif;letter-spacing:0.249px;">Build log</span>
<svg class="i" style="left:339.30px;top:495.80px" width="12" height="12" viewBox="0 0 12 12"><path d="M3.800 3.900l4.400 4.200M8.200 3.900L3.800 8.100" stroke="#8a8a8a" stroke-width=".9" fill="none"/></svg>
<svg class="i" style="left:354.50px;top:496.50px" width="11" height="11" viewBox="0 0 12 12"><path d="M2 4.600c1.400-3 6-3 7.400 0 .4 2-1.600 3-3 2.400L5.800 10.400 4 9.200l1-2.400C3.400 7 2.200 6 2 4.600z" fill="#d82a1a"/><path d="M4 9.200l1.800 1.200" stroke="#8a5a20" stroke-width="1.200"/></svg>
<span id="t67" class="t" style="left:365.4px;top:496.40px;font-size:6.3px;line-height:12px;color:#222;font-family:'Liberation Sans', sans-serif;letter-spacing:0.146px;">Build messages</span>
<svg class="i" style="left:412.00px;top:495.80px" width="12" height="12" viewBox="0 0 12 12"><path d="M3.800 3.900l4.400 4.200M8.200 3.900L3.800 8.100" stroke="#8a8a8a" stroke-width=".9" fill="none"/></svg>
<svg class="i" style="left:427.90px;top:496.50px" width="11" height="11" viewBox="0 0 12 12"><path d="M3 1.600h4.200l1.800 1.800v7H3z" fill="#fdfdfd" stroke="#a8b0c8" stroke-width=".7"/><path d="M8.300 2.200L4.900 7.600" stroke="#f07a22" stroke-width="2.100" stroke-linecap="round"/><path d="M4.100 9l.3-1.700 1.300.9z" fill="#444"/></svg>
<span id="t68" class="t" style="left:438.9px;top:496.40px;font-size:6.3px;line-height:12px;color:#222;font-family:'Liberation Sans', sans-serif;letter-spacing:0.335px;">CppCheck/Vera++</span>
<svg class="i" style="left:495.70px;top:495.80px" width="12" height="12" viewBox="0 0 12 12"><path d="M3.800 3.900l4.400 4.200M8.200 3.900L3.800 8.100" stroke="#8a8a8a" stroke-width=".9" fill="none"/></svg>
<svg class="i" style="left:511.80px;top:496.50px" width="11" height="11" viewBox="0 0 12 12"><path d="M3 1.600h4.200l1.800 1.800v7H3z" fill="#fdfdfd" stroke="#a8b0c8" stroke-width=".7"/><path d="M8.300 2.200L4.900 7.600" stroke="#f07a22" stroke-width="2.100" stroke-linecap="round"/><path d="M4.100 9l.3-1.700 1.300.9z" fill="#444"/></svg>
<span id="t69" class="t" style="left:523px;top:496.40px;font-size:6.3px;line-height:12px;color:#222;font-family:'Liberation Sans', sans-serif;letter-spacing:0.237px;">CppCheck/Vera++ messages</span>
<svg class="i" style="left:610.50px;top:495.80px" width="12" height="12" viewBox="0 0 12 12"><path d="M3.800 3.900l4.400 4.200M8.200 3.900L3.800 8.100" stroke="#8a8a8a" stroke-width=".9" fill="none"/></svg>
<svg class="i" style="left:626.10px;top:496.50px" width="11" height="11" viewBox="0 0 12 12"><path d="M3 1.600h4.200l1.800 1.800v7H3z" fill="#fdfdfd" stroke="#a8b0c8" stroke-width=".7"/><path d="M8.300 2.200L4.900 7.600" stroke="#f07a22" stroke-width="2.100" stroke-linecap="round"/><path d="M4.100 9l.3-1.700 1.300.9z" fill="#444"/></svg>
<span id="t70" class="t" style="left:638px;top:496.40px;font-size:6.3px;line-height:12px;color:#222;font-family:'Liberation Sans', sans-serif;letter-spacing:0.173px;">Cscope</span>
<svg class="i" style="left:660.00px;top:495.80px" width="12" height="12" viewBox="0 0 12 12"><path d="M3.800 3.900l4.400 4.200M8.200 3.900L3.800 8.100" stroke="#8a8a8a" stroke-width=".9" fill="none"/></svg>
<svg class="i" style="left:675.70px;top:496.50px" width="11" height="11" viewBox="0 0 12 12"><circle cx="6" cy="6" r="3.800" fill="none" stroke="#2070e0" stroke-width="2" stroke-dasharray="1.600 1.000"/><circle cx="6" cy="6" r="3" fill="none" stroke="#2070e0" stroke-width="1.600"/></svg>
<span id="t71" class="t" style="left:687px;top:496.40px;font-size:6.3px;line-height:12px;color:#222;font-family:'Liberation Sans', sans-serif;letter-spacing:0.341px;">Debugger</span>
<svg class="i" style="left:717.00px;top:495.80px" width="12" height="12" viewBox="0 0 12 12"><path d="M3.800 3.900l4.400 4.200M8.200 3.900L3.800 8.100" stroke="#8a8a8a" stroke-width=".9" fill="none"/></svg>
<svg class="i" style="left:733.10px;top:496.50px" width="11" height="11" viewBox="0 0 12 12"><path d="M3 1.600h4.200l1.800 1.800v7H3z" fill="#fdfdfd" stroke="#a8b0c8" stroke-width=".7"/><path d="M8.300 2.200L4.900 7.600" stroke="#f07a22" stroke-width="2.100" stroke-linecap="round"/><path d="M4.100 9l.3-1.700 1.300.9z" fill="#444"/></svg>
<span id="t72" class="t" style="left:744.5px;top:496.40px;font-size:6.3px;line-height:12px;color:#222;font-family:'Liberation Sans', sans-serif;letter-spacing:0.189px;">DoxyBlocks</span>
<svg class="i" style="left:779.00px;top:495.80px" width="12" height="12" viewBox="0 0 12 12"><path d="M3.800 3.900l4.400 4.200M8.200 3.900L3.800 8.100" stroke="#8a8a8a" stroke-width=".9" fill="none"/></svg>
<svg class="i" style="left:794.70px;top:496.50px" width="11" height="11" viewBox="0 0 12 12"><path d="M3 1.400h4.400l1.800 1.800v7.400H3z" fill="#f4f0ff" stroke="#7a62c0" stroke-width=".9"/><path d="M4.800 8.600V4.200h2.600M4.800 6.200h2" stroke="#6a48c0" stroke-width="1" fill="none"/></svg>
<span id="t73" class="t" style="left:805.6px;top:496.40px;font-size:6.3px;line-height:12px;color:#222;font-family:'Liberation Sans', sans-serif;letter-spacing:0.325px;">Fortran info</span>
<svg class="i" style="left:841.70px;top:495.80px" width="12" height="12" viewBox="0 0 12 12"><path d="M3.800 3.900l4.400 4.200M8.200 3.900L3.800 8.100" stroke="#8a8a8a" stroke-width=".9" fill="none"/></svg>
<svg class="i" style="left:857.50px;top:496.50px" width="11" height="11" viewBox="0 0 12 12"><path d="M2 4.600l3-3v2c3 0 5 2 5 5.600H6.400c0-1.600-.4-2.400-1.400-2.400v2z" fill="#25a025" stroke="#157a15" stroke-width=".5"/><path d="M5 9.400h5" stroke="#157a15" stroke-width="1.400"/></svg>
<span id="t74" class="t" style="left:869px;top:496.40px;font-size:6.3px;line-height:12px;color:#222;font-family:'Liberation Sans', sans-serif;letter-spacing:0.141px;">Closed files list</span>
<svg class="i" style="left:913.50px;top:495.80px" width="12" height="12" viewBox="0 0 12 12"><path d="M3.800 3.900l4.400 4.200M8.200 3.900L3.800 8.100" stroke="#8a8a8a" stroke-width=".9" fill="none"/></svg>
<svg class="i" style="left:928.60px;top:496.50px" width="11" height="11" viewBox="0 0 12 12"><rect x="1.600" y="2.600" width="7" height="7.600" fill="#e6e6e6" stroke="#8c8c8c" stroke-width=".8"/><circle cx="6" cy="4.800" r="2.800" fill="#bcdcf4" stroke="#4a8ccc" stroke-width=".9"/><path d="M8 7l2.600 2.800" stroke="#c49a20" stroke-width="1.800" stroke-linecap="round"/></svg>
<span id="t75" class="t" style="left:940.8px;top:496.40px;font-size:6.3px;line-height:12px;color:#222;font-family:'Liberation Sans', sans-serif;letter-spacing:0.122px;">Thread search</span>
<svg class="i" style="left:983.30px;top:495.80px" width="12" height="12" viewBox="0 0 12 12"><path d="M3.800 3.900l4.400 4.200M8.200 3.900L3.800 8.100" stroke="#8a8a8a" stroke-width=".9" fill="none"/></svg>
<span id="t76" class="t" style="left:123.6px;top:507.60px;font-size:6.3px;line-height:12px;color:#2c2ce8;font-family:'Liberation Mono', monospace;font-style:italic;letter-spacing:0.210px;">0 error(s), 0 warning(s) (0 minute(s), 16 second(s))</span>
<div style="left:351px;top:68px;width:559px;height:288.6px;background:#0c0c0c;border:1px solid #3f8fd8;box-shadow:0 3px 10px rgba(0,0,0,.16);"></div>
<div style="left:352px;top:69px;width:557px;height:17px;background:#fff;"></div>
<div style="left:356.4px;top:72.8px;width:8.2px;height:6.8px;background:#e4e4e4;border:1px solid #c4c4c4;"></div>
<div style="left:357.2px;top:74.2px;width:3.4px;height:4.4px;background:#56657f;"></div>
<div style="left:358px;top:76.6px;width:1.4px;height:1.4px;background:#5cb85c;"></div>
<span id="t77" class="t" style="left:368.3px;top:71.40px;font-size:6.3px;line-height:12px;color:#111;font-family:'Liberation Sans', sans-serif;letter-spacing:0.208px;">&quot;C:\Users\aananda\OneDrive - ECI Telecom LTD\</span>
<span id="t78" class="t" style="left:515.3px;top:71.40px;font-size:6.3px;line-height:12px;color:#111;font-family:'Liberation Sans', sans-serif;letter-spacing:0.286px;">Cybersecurity hacking\</span>
<span id="t79" class="t" style="left:585.6px;top:71.40px;font-size:6.3px;line-height:12px;color:#111;font-family:'Liberation Sans', sans-serif;letter-spacing:0.302px;">Demo1\bin\Debug\Demo1.exe&quot;</span>
<svg class="i" style="left:838.20px;top:71.00px" width="12" height="12" viewBox="0 0 12 12"><path d="M3.200 6h5.600" stroke="#222" stroke-width="1"/></svg>
<svg class="i" style="left:864.00px;top:70.70px" width="12" height="12" viewBox="0 0 12 12"><rect x="3.400" y="3.400" width="5.200" height="5.200" fill="none" stroke="#333" stroke-width=".8"/></svg>
<svg class="i" style="left:890.00px;top:70.70px" width="12" height="12" viewBox="0 0 12 12"><path d="M3.200 3.200l5.600 5.600M8.800 3.200l-5.600 5.600" stroke="#333" stroke-width=".8"/></svg>
<div style="left:899px;top:86px;width:10px;height:269.6px;background:#f0f0f0;"></div>
<div style="left:899.4px;top:95.6px;width:9.6px;height:8.8px;background:#c8c8c8;"></div>
<svg class="i" style="left:898.40px;top:84.80px" width="12" height="12" viewBox="0 0 12 12"><path d="M3.800 7L6 4.800 8.200 7" stroke="#444" stroke-width="1" fill="none"/></svg>
<svg class="i" style="left:898.40px;top:345.00px" width="12" height="12" viewBox="0 0 12 12"><path d="M3.800 5L6 7.200 8.200 5" stroke="#444" stroke-width="1" fill="none"/></svg>
<span id="t80" class="t" style="left:351.4px;top:84.70px;font-size:7.6px;line-height:12px;color:#d8d8d8;font-family:'Liberation Mono', monospace;letter-spacing:-0.014px;">Hello world!</span>
<span id="t81" class="t" style="left:351.4px;top:102.94px;font-size:7.6px;line-height:12px;color:#d8d8d8;font-family:'Liberation Mono', monospace;letter-spacing:-0.001px;">Process returned 0 (0x0)   execution time : 32.602 s</span>
<span id="t82" class="t" style="left:351.4px;top:112.06px;font-size:7.6px;line-height:12px;color:#d8d8d8;font-family:'Liberation Mono', monospace;letter-spacing:-0.005px;">Press any key to continue.</span>
<div style="left:0px;top:0px;width:1024px;height:1px;background:#ff5a5a;"></div>
<div style="left:0px;top:523px;width:1024px;height:1px;background:#ff5a5a;"></div>
<div style="left:0px;top:0px;width:1px;height:524px;background:#ff5a5a;"></div>
<div style="left:1023px;top:0px;width:1px;height:524px;background:#ff5a5a;"></div>
</body></html>
